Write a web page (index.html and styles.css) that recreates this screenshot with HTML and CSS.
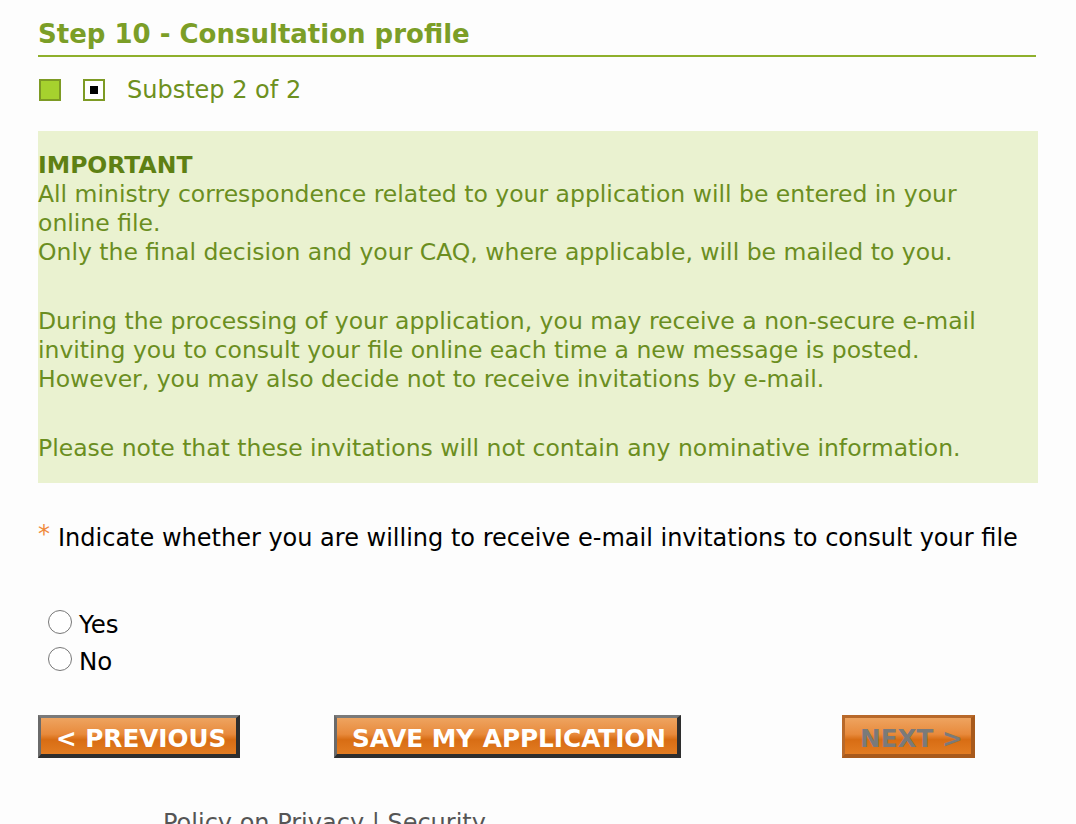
FILE: index.html
```html
<!DOCTYPE html>
<html lang="en">
<head>
<meta charset="utf-8">
<title>Step 10 - Consultation profile</title>
<link rel="stylesheet" href="styles.css">
</head>
<body>
<div class="page">
  <h1 class="step-title">Step 10 - Consultation profile</h1>
  <div class="substep">
    <span class="sq sq-done"></span>
    <span class="sq sq-current"><span class="dot"></span></span>
    <span class="substep-label">Substep 2 of 2</span>
  </div>
  <div class="notice">
    <p><strong>IMPORTANT</strong><br>All ministry correspondence related to your application will be entered in your online file.<br>Only the final decision and your CAQ, where applicable, will be mailed to you.</p>
    <p>During the processing of your application, you may receive a non-secure e-mail inviting you to consult your file online each time a new message is posted. However, you may also decide not to receive invitations by e-mail.</p>
    <p>Please note that these invitations will not contain any nominative information.</p>
  </div>
  <div class="question"><span class="req">*</span>Indicate whether you are willing to receive e-mail invitations to consult your file</div>
  <div class="options">
    <label class="opt"><span class="radio"></span>Yes</label>
    <label class="opt"><span class="radio"></span>No</label>
  </div>
  <div class="buttons">
    <span class="btn btn-prev">&lt; PREVIOUS</span>
    <span class="btn btn-save">SAVE MY APPLICATION</span>
    <span class="btn btn-next">NEXT &gt;</span>
  </div>
  <div class="footer">Policy on Privacy | Security</div>
</div>
</body>
</html>
```
FILE: styles.css
```css
html, body {
  margin: 0;
  padding: 0;
  background: #fdfdfd;
}
body {
  font-family: "DejaVu Sans", Verdana, sans-serif;
  color: #000;
}
.page {
  padding: 0 38px 0 38px;
  width: 1000px;
}
.step-title {
  margin: 0;
  width: 998px;
  padding-top: 18px;
  padding-bottom: 5px;
  font-size: 26px;
  font-weight: bold;
  color: #7b9e27;
  border-bottom: 2px solid #8fb02c;
  line-height: 32px;
}
.substep {
  display: flex;
  align-items: center;
  height: 65px;
}
.sq {
  width: 22px;
  height: 22px;
  box-sizing: border-box;
  border: 2px solid #7d9a24;
  display: inline-flex;
  align-items: center;
  justify-content: center;
  flex: none;
}
.sq-done {
  margin-left: 1px;
  background: #a6d22e;
}
.sq-current {
  margin-left: 22px;
  background: #fff;
}
.dot {
  width: 8px;
  height: 8px;
  background: #000;
}
.substep-label {
  margin-left: 22px;
  font-size: 24px;
  color: #6d9020;
}
.notice {
  margin-top: 9px;
  width: 1000px;
  background: #eaf2d0;
  padding: 20px 30px 20px 0;
  box-sizing: border-box;
  color: #6b8e1f;
  font-size: 23.5px;
  line-height: 29px;
}
.notice p {
  margin: 0 0 40px 0;
}
.notice p:last-child {
  margin-bottom: 0;
}
.notice strong {
  color: #5e8013;
}
.question {
  margin-top: 40px;
  font-size: 24px;
  line-height: 30px;
  display: flex;
  align-items: flex-start;
  white-space: nowrap;
}
.req {
  color: #f08a3a;
  font-size: 24px;
  line-height: 22px;
  width: 20px;
  flex: none;
}
.options {
  margin-top: 60px;
  padding-left: 10px;
  display: flex;
  flex-direction: column;
  gap: 13px;
}
.opt {
  display: flex;
  align-items: center;
  font-size: 24.5px;
  line-height: 24px;
}
.radio {
  width: 22px;
  height: 22px;
  border: 1.5px solid #777;
  border-radius: 50%;
  background: #fff;
  margin-right: 7px;
  position: relative;
  top: -3px;
}
.buttons {
  margin-top: 41px;
  display: flex;
  align-items: center;
}
.btn {
  display: inline-block;
  height: 43px;
  box-sizing: border-box;
  padding: 0 15px;
  line-height: 41px;
  font-size: 24.7px;
  font-weight: bold;
  color: #fff;
  background: linear-gradient(#eea460 0%, #e88a3c 45%, #d86d14 60%, #e27c22 100%);
  border-style: solid;
  border-width: 3px 4px 4px 3px;
  border-color: #7a7a7a #2e2e2e #2e2e2e #6a6a6a;
  white-space: nowrap;
  overflow: hidden;
}
.btn-prev {
  width: 202px;
}
.btn-save {
  margin-left: 94px;
  width: 347px;
}
.btn-next {
  margin-left: 161px;
  width: 133px;
  color: #7a7a7a;
  border-color: #b8692a #a85a1c #a85a1c #b8692a;
}
.footer {
  margin-top: 50px;
  padding-left: 125px;
  font-size: 24px;
  color: #555;
  line-height: 30px;
}
```
